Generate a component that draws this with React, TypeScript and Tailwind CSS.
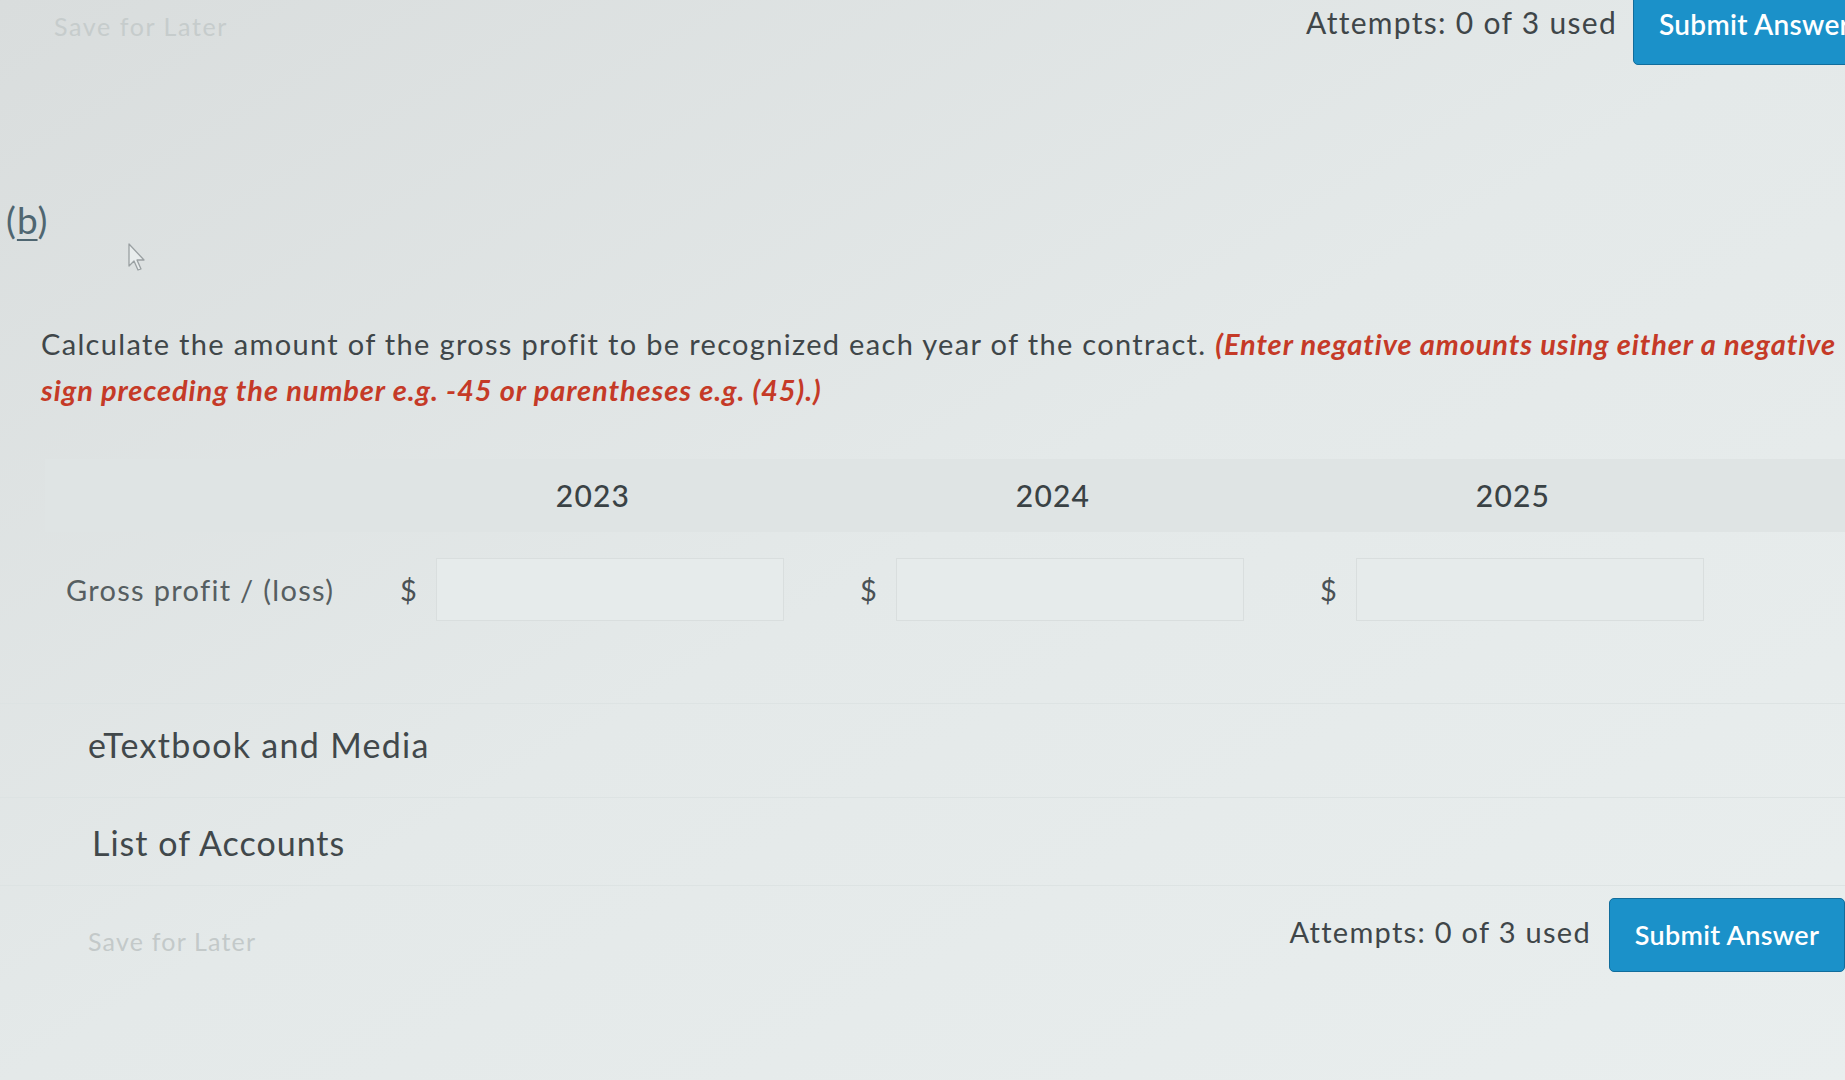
import React from "react";

function Cursor() {
  return (
    <svg width="20" height="30" viewBox="0 0 20 30" className="absolute left-[127px] top-[242px]">
      <path d="M2 2 L2 24 L7 19 L11 28 L14 27 L10 18 L17 18 Z" fill="#e9eded" stroke="#9aa0a2" strokeWidth="1.3" strokeLinejoin="round" />
    </svg>
  );
}

function AmountCell() {
  return (
    <div className="flex items-center">
      <span className="w-[18px] text-[29px] leading-[34px] text-[#4a5154]">$</span>
      <div className="ml-[18px] h-[63px] w-[348px] border border-[#d9dede] bg-[#e6ebeb]" />
    </div>
  );
}

export default function App() {
  return (
    <div className="relative h-[1080px] w-[1845px] overflow-hidden bg-linear-to-br from-[#d9dddd] via-[#e4e9e9] to-[#e9eeee] font-['Lato','Open_Sans',sans-serif] text-[#3d4447]">
      {/* top bar */}
      <div className="flex h-[65px] items-start justify-between pl-[54px]">
        <span className="mt-[12px] text-[25px] leading-[28px] tracking-[1.6px] text-[#c6cccc]">Save for Later</span>
        <div className="-mr-[32px] flex items-start gap-[16px]">
          <span className="mt-[4px] text-[30px] leading-[36px] tracking-[1.3px] text-[#3f4649]">Attempts: 0 of 3 used</span>
          <button className="-mt-[10px] h-[75px] w-[244px] rounded-[5px] border border-[#116d9c] bg-[#1b91c9] pb-[8px] pl-[25px] text-left text-[28px] font-semibold tracking-[0.3px] text-white">
            Submit Answer
          </button>
        </div>
      </div>

      {/* part label */}
      <div className="ml-[6px] mt-[135px] text-[37px] leading-[40px] tracking-[1px] text-[#4f6671]">
        (<span className="underline decoration-[2px] underline-offset-[5px]">b</span>)
      </div>
      <Cursor />

      {/* instructions */}
      <p className="ml-[41px] mt-[81px] w-[1804px] whitespace-nowrap text-[29px] leading-[46px] tracking-[1.33px] text-[#3f4649]">
        Calculate the amount of the gross profit to be recognized each year of the contract.{" "}
        <span className="font-bold italic tracking-[0.9px] text-[#c53a27]">
          (Enter negative amounts using either a negative
          <br />
          sign preceding the number e.g. -45 or parentheses e.g. (45).)
        </span>
      </p>

      {/* table */}
      <div className="ml-[45px] mt-[46px]">
        <div className="grid h-[73px] grid-cols-[281px_386px_386px_386px] items-center gap-x-[74px] bg-[#dfe4e4]">
          <div />
          <div className="text-center text-[30px] font-medium tracking-[1.2px] text-[#3a4245]">2023</div>
          <div className="text-center text-[30px] font-medium tracking-[1.2px] text-[#3a4245]">2024</div>
          <div className="text-center text-[30px] font-medium tracking-[1.2px] text-[#3a4245]">2025</div>
        </div>
        <div className="mt-[26px] grid grid-cols-[281px_386px_386px_386px] items-center gap-x-[74px]">
          <div className="pl-[21px] text-[29px] leading-[34px] tracking-[1.3px] text-[#565e61] whitespace-nowrap">Gross profit / (loss)</div>
          <AmountCell />
          <AmountCell />
          <AmountCell />
        </div>
      </div>

      {/* links */}
      <div className="mt-[82px] border-t border-[#dde3e3]" />
      <div className="ml-[88px] mt-[21px] text-[34px] leading-[40px] tracking-[1.3px] text-[#41484b]">eTextbook and Media</div>
      <div className="mt-[32px] border-t border-[#dde3e3]" />
      <div className="ml-[92px] mt-[25px] text-[34px] leading-[40px] tracking-[1px] text-[#41484b]">List of Accounts</div>
      <div className="mt-[22px] border-t border-[#dde3e3]" />

      {/* bottom bar */}
      <div className="mt-[12px] flex items-start justify-between pl-[88px]">
        <span className="mt-[28px] text-[25px] leading-[30px] tracking-[1.2px] text-[#c3c9c9]">Save for Later</span>
        <div className="flex items-start gap-[18px]">
          <span className="mt-[16px] text-[29px] leading-[36px] tracking-[1.3px] text-[#3f4649]">Attempts: 0 of 3 used</span>
          <button className="h-[74px] w-[236px] rounded-[5px] border border-[#116d9c] bg-[#1b91c9] text-center text-[27px] font-semibold tracking-[0.3px] text-white">
            Submit Answer
          </button>
        </div>
      </div>
    </div>
  );
}
